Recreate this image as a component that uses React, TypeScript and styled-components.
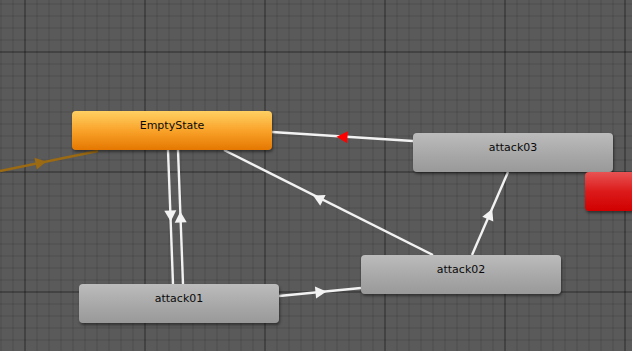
import React from 'react';
import styled, { createGlobalStyle } from 'styled-components';

const GlobalStyle = createGlobalStyle`
  html, body {
    margin: 0;
    padding: 0;
    width: 632px;
    height: 351px;
    overflow: hidden;
    background: #5a5a5a;
  }
`;

// animator graph canvas with minor (12px) and major (120px) grid lines
const GraphCanvas = styled.div`
  position: relative;
  width: 632px;
  height: 351px;
  overflow: hidden;
  background-color: #5a5a5a;
  background-image:
    linear-gradient(90deg, rgba(0, 0, 0, 0.2) 0 2px, transparent 2px),
    linear-gradient(180deg, rgba(0, 0, 0, 0.2) 0 2px, transparent 2px),
    linear-gradient(90deg, rgba(0, 0, 0, 0.07) 0 2px, transparent 2px),
    linear-gradient(180deg, rgba(0, 0, 0, 0.07) 0 2px, transparent 2px);
  background-size: 120px 100%, 100% 120px, 12px 100%, 100% 12px;
  background-position: 24px 0, 0 51px, 0px 0, 0 3px;
`;

const EdgeLayer = styled.svg`
  position: absolute;
  left: 0;
  top: 0;
  width: 632px;
  height: 351px;
`;

type NodeKind = 'default' | 'entry' | 'any';

const gradients: Record<NodeKind, string> = {
  default: 'linear-gradient(180deg, #bcbcbc 0%, #a6a6a6 60%, #999999 100%)',
  entry: 'linear-gradient(180deg, #ffd063 0%, #f9a32a 50%, #e57700 100%)',
  any: 'linear-gradient(180deg, #e85353 0%, #dc1a1a 50%, #d10000 100%)',
};

const StateNode = styled.div<{ $x: number; $y: number; $kind: NodeKind }>`
  position: absolute;
  left: ${p => p.$x}px;
  top: ${p => p.$y}px;
  width: 200px;
  height: 39px;
  box-sizing: border-box;
  padding-top: 8px;
  border-radius: 4px;
  background: ${p => gradients[p.$kind]};
  box-shadow: 1px 2px 3px rgba(0, 0, 0, 0.45);
  font-family: 'DejaVu Sans', 'Liberation Sans', sans-serif;
  font-size: 11px;
  line-height: 14px;
  color: #0a0a0a;
  text-align: center;
`;

type Pt = [number, number];

interface Edge {
  from: Pt;
  to: Pt;
  head: Pt; // arrowhead centre
  color: string;
  headColor?: string;
}

const edges: Edge[] = [
  { from: [0, 171], to: [98, 151], head: [41, 162.5], color: '#9b6a12' },
  { from: [413, 141], to: [272, 132], head: [342, 137], color: '#f2f2f2', headColor: '#ff0000' },
  { from: [433, 255], to: [224, 150], head: [318, 198], color: '#f2f2f2' },
  { from: [472, 255], to: [508, 172], head: [490, 214], color: '#f2f2f2' },
  { from: [279, 296], to: [361, 288], head: [321, 292], color: '#f2f2f2' },
  { from: [168, 150], to: [173, 284], head: [170.5, 216], color: '#f2f2f2' },
  { from: [183, 284], to: [178, 150], head: [180.5, 217], color: '#f2f2f2' },
];

function arrowHead(e: Edge) {
  const dx = e.to[0] - e.from[0];
  const dy = e.to[1] - e.from[1];
  const len = Math.hypot(dx, dy);
  const ux = dx / len;
  const uy = dy / len;
  const [cx, cy] = e.head;
  const tip = [cx + ux * 5.5, cy + uy * 5.5];
  const b1 = [cx - ux * 5.5 - uy * 6, cy - uy * 5.5 + ux * 6];
  const b2 = [cx - ux * 5.5 + uy * 6, cy - uy * 5.5 - ux * 6];
  return `${tip[0]},${tip[1]} ${b1[0]},${b1[1]} ${b2[0]},${b2[1]}`;
}

const nodes: { name: string; x: number; y: number; kind: NodeKind }[] = [
  { name: 'EmptyState', x: 72, y: 111, kind: 'entry' },
  { name: 'attack03', x: 413, y: 133, kind: 'default' },
  { name: 'attack02', x: 361, y: 255, kind: 'default' },
  { name: 'attack01', x: 79, y: 284, kind: 'default' },
  { name: '', x: 585, y: 172, kind: 'any' },
];

export default function App() {
  return (
    <>
      <GlobalStyle />
      <GraphCanvas>
        <EdgeLayer viewBox="0 0 632 351">
          {edges.map((e, i) => (
            <g key={i}>
              <line
                x1={e.from[0]}
                y1={e.from[1]}
                x2={e.to[0]}
                y2={e.to[1]}
                stroke={e.color}
                strokeWidth={2.4}
              />
              <polygon points={arrowHead(e)} fill={e.headColor ?? e.color} />
            </g>
          ))}
        </EdgeLayer>
        {nodes.map(n => (
          <StateNode key={n.name || 'any'} $x={n.x} $y={n.y} $kind={n.kind}>
            {n.name}
          </StateNode>
        ))}
      </GraphCanvas>
    </>
  );
}
